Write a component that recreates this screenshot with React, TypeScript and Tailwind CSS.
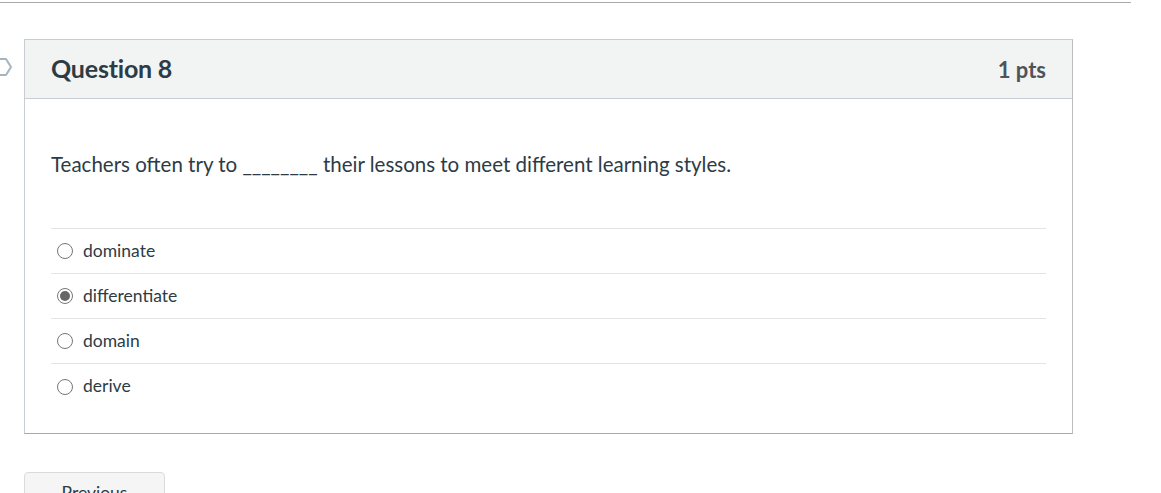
import React from "react";

function Radio({ checked }: { checked?: boolean }) {
  return (
    <span className="w-[16px] h-[16px] rounded-full border border-[#767676] bg-white flex items-center justify-center shrink-0">
      {checked && <span className="w-[10px] h-[10px] rounded-full bg-[#666]" />}
    </span>
  );
}

export default function App() {
  const options = [
    { label: "dominate" },
    { label: "differentiate", checked: true },
    { label: "domain" },
    { label: "derive" },
  ];
  return (
    <div className="w-[1161px] h-[493px] bg-white overflow-hidden text-[#2d3b45]" style={{ fontFamily: "Lato, 'Liberation Sans', sans-serif" }}>
      <div className="pt-[2px]">
        <div className="w-[1131px] h-[1px] bg-[#a8a8a8]" />
      </div>
      <div className="flex mt-[36px]">
        <div className="w-[24px] shrink-0 relative">
          <svg className="absolute left-[-6px] top-[18px]" width="20" height="20" viewBox="0 0 20 20">
            <path d="M1 2 H12 L17 10 L12 18 H1" fill="none" stroke="#a3b5c3" strokeWidth="2" strokeLinejoin="round" />
          </svg>
        </div>
        <div className="w-[1049px] border border-[#c7cdd1] border-r-[#bdbdbd] border-b-[#a9a9a9]">
          <div className="h-[59px] bg-[#f2f3f3] border-b border-[#c7cdd1] flex items-center justify-between pl-[26px] pr-[26px]">
            <span className="text-[25px] font-bold text-[#2d3b45] tracking-[-0.2px]">Question 8</span>
            <span className="text-[22px] font-bold text-[#4f5459]">1 pts</span>
          </div>
          <div className="px-[26px] pt-[50px] pb-[24px]">
            <p className="text-[20.5px] leading-[30px] text-[#2d3b45]">
              Teachers often try to ________ their lessons to meet different learning styles.
            </p>
            <div className="mt-[49px] border-t border-[#e2e5e7]">
              {options.map((o, i) => (
                <div
                  key={o.label}
                  className={`h-[45px] flex items-center gap-[10px] pl-[6px] ${i < options.length - 1 ? "border-b border-[#e2e5e7]" : ""}`}
                >
                  <Radio checked={o.checked} />
                  <span className="text-[17.5px] text-[#2d3b45]">{o.label}</span>
                </div>
              ))}
            </div>
          </div>
        </div>
      </div>
      <div className="flex mt-[38px] pl-[24px]">
        <div className="w-[141px] h-[40px] bg-[#f5f5f5] border border-[#d8dcde] rounded-[4px] flex justify-center pt-[7px]">
          <span className="text-[17.5px] leading-[26px] text-[#2d3b45]">Previous</span>
        </div>
      </div>
    </div>
  );
}
